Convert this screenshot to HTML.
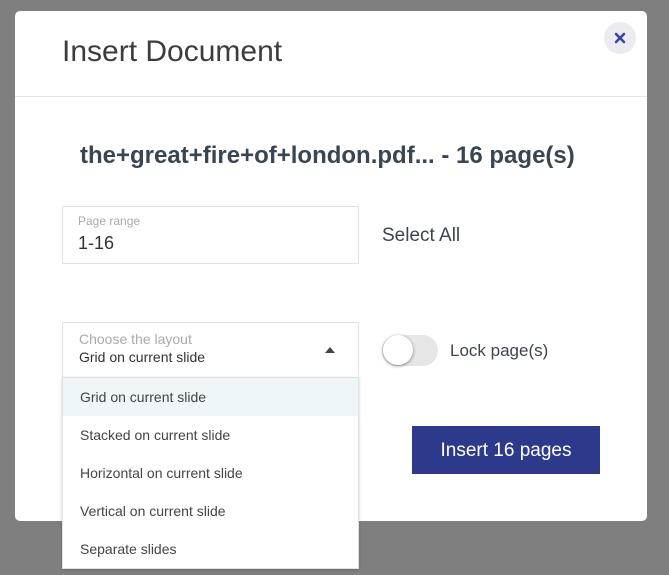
<!DOCTYPE html>
<html style="overflow:hidden;height:575px"><head><style>
html,body{margin:0;width:669px;height:575px;overflow:hidden}
body{background:#7f7f7f;position:relative;font-family:"Liberation Sans",sans-serif}
.a{position:absolute}
.modal{left:15px;top:11px;width:632px;height:510px;background:#fff;border-radius:5px}
.box{background:#fff;border:1px solid #e2e2e2;box-sizing:border-box}
</style></head><body>
<div class="a modal">
 <div class="a" style="left:47px;top:24px;font-size:30px;color:#3c3c3c">Insert Document</div>
 <div class="a" style="left:589px;top:11px;width:32px;height:32px;border-radius:50%;background:#ececf0"></div>
 <svg class="a" style="left:597px;top:19px" width="16" height="16"><path d="M4 4L12 12M12 4L4 12" stroke="#3a45a0" stroke-width="2.6" stroke-linecap="round"/></svg>
 <div class="a" style="left:0;top:85px;width:632px;height:1px;background:#e4e4e4"></div>
 <div class="a" style="left:65px;top:131px;font-size:24px;font-weight:bold;color:#3a4552">the+great+fire+of+london.pdf... - 16 page(s)</div>
 <div class="a box" style="left:47px;top:195px;width:297px;height:58px">
  <div class="a" style="left:15px;top:7px;font-size:12px;color:#aaa">Page range</div>
  <div class="a" style="left:15px;top:26px;font-size:18px;color:#333">1-16</div>
 </div>
 <div class="a" style="left:367px;top:214px;font-size:19px;color:#3c4550">Select All</div>
 <div class="a box" style="left:47px;top:311px;width:297px;height:56px">
  <div class="a" style="left:16px;top:8px;font-size:14px;color:#aaa">Choose the layout</div>
  <div class="a" style="left:16px;top:26px;font-size:14px;color:#333">Grid on current slide</div>
  <div class="a" style="left:262px;top:24px;width:0;height:0;border-left:5px solid transparent;border-right:5px solid transparent;border-bottom:6px solid #444"></div>
 </div>
 <div class="a" style="left:367px;top:324px;width:56px;height:31px;border-radius:16px;background:#e6e6e6"></div>
 <div class="a" style="left:368px;top:324px;width:30px;height:30px;border-radius:50%;background:#fff;box-shadow:0 1px 3px rgba(0,0,0,.45)"></div>
 <div class="a" style="left:435px;top:330px;font-size:17px;color:#3c4550">Lock page(s)</div>
 <div class="a" style="left:397px;top:415px;width:188px;height:48px;background:#2d3a8c;color:#fff;font-size:19px;text-align:center;line-height:50px">Insert 16 pages</div>
</div>
<div class="a box" style="left:62px;top:377px;width:297px;height:192px;box-shadow:0 1px 3px rgba(0,0,0,.2);font-size:14px;color:#444">
 <div style="height:38px;line-height:38px;padding-left:17px;background:#eef6fa">Grid on current slide</div>
 <div style="height:38px;line-height:38px;padding-left:17px">Stacked on current slide</div>
 <div style="height:38px;line-height:38px;padding-left:17px">Horizontal on current slide</div>
 <div style="height:38px;line-height:38px;padding-left:17px">Vertical on current slide</div>
 <div style="height:38px;line-height:38px;padding-left:17px">Separate slides</div>
</div>
</body></html>
